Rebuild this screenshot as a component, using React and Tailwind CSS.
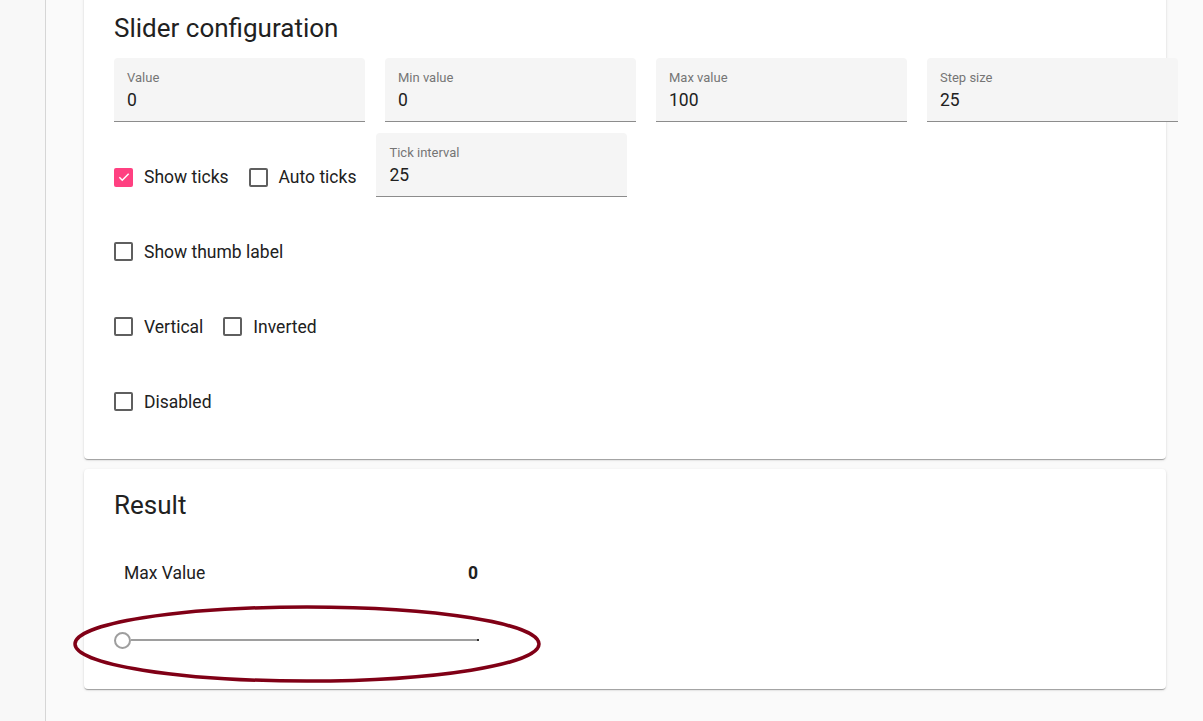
import React from 'react';

const font = { fontFamily: 'Roboto, "Noto Sans", sans-serif' };

function Field({ label, value, className = '' }) {
  return (
    <div className={`w-[251px] shrink-0 h-[64px] bg-[#f5f5f5] rounded-t-[4px] border-b border-[#8c8c8c] px-[13px] pt-[12px] ${className}`}>
      <div className="text-[13px] leading-[16px] text-[#757575]">{label}</div>
      <div className="mt-[2px] text-[17.5px] leading-[24px] text-[#212121]">{value}</div>
    </div>
  );
}

function Check({ label, checked }) {
  return (
    <label className="flex items-center gap-[11px] text-[17.5px] leading-[24px] text-[#212121] whitespace-nowrap">
      {checked ? (
        <span className="w-[19px] h-[19px] rounded-[2px] bg-[#ff4081] flex items-center justify-center">
          <svg width="14" height="14" viewBox="0 0 24 24" fill="none" stroke="white" strokeWidth="2.6">
            <path d="M4 12.5l5 5L20 6.5" />
          </svg>
        </span>
      ) : (
        <span className="w-[19px] h-[19px] rounded-[2px] border-2 border-[#5f5f5f] box-border" />
      )}
      <span>{label}</span>
    </label>
  );
}

const cardCls =
  'bg-white rounded-[4px] shadow-[0_2px_1px_-1px_rgba(0,0,0,0.2),0_1px_1px_0_rgba(0,0,0,0.14),0_1px_3px_0_rgba(0,0,0,0.12)] w-[1082px] px-[30px]';

export default function App() {
  return (
    <div className="relative flex min-h-[721px] h-[721px] overflow-hidden bg-[#fafafa]" style={font}>
      <div className="w-[46px] shrink-0 border-r border-[#d6d6d6] bg-[#f8f8f8]" />
      <div className="pl-[38px] flex flex-col gap-[10px] -mt-[8px]">
        <div className={`${cardCls} pt-[20px] pb-[20px]`}>
          <h2 className="text-[26px] leading-[32px] text-[#212121]">Slider configuration</h2>
          <div className="mt-[14px] flex gap-[20px]">
            <Field label="Value" value="0" />
            <Field label="Min value" value="0" />
            <Field label="Max value" value="100" />
            <Field label="Step size" value="25" />
          </div>
          <div className="mt-[11px] flex items-end">
            <div className="flex gap-[20px] mb-[8px] mr-[20px]">
              <Check label="Show ticks" checked />
              <Check label="Auto ticks" />
            </div>
            <Field label="Tick interval" value="25" />
          </div>
          <div className="flex flex-col">
            <div className="h-[75px] flex items-center mt-[17px]">
              <Check label="Show thumb label" />
            </div>
            <div className="h-[75px] flex items-center gap-[20px]">
              <Check label="Vertical" />
              <Check label="Inverted" />
            </div>
            <div className="h-[75px] flex items-center">
              <Check label="Disabled" />
            </div>
          </div>
        </div>

        <div className={`${cardCls} pt-[20px] pb-[25px]`}>
          <h2 className="text-[26px] leading-[32px] text-[#212121]">Result</h2>
          <div className="mt-[40px] w-[364px] flex justify-between pl-[10px] text-[17.5px] leading-[24px] text-[#212121]">
            <span>Max Value</span>
            <span className="font-bold">0</span>
          </div>
          <div className="mt-[31px] w-[365px] h-[48px] flex items-center relative">
            <div className="w-[17px] h-[17px] rounded-full border-2 border-[#9e9e9e] bg-white shrink-0 box-border" />
            <div className="flex-1 h-[2px] bg-[#9e9e9e] flex justify-end">
              <div className="w-[2px] h-[2px] bg-[#333]" />
            </div>
          </div>
        </div>
      </div>

      <svg className="absolute left-0 top-0 pointer-events-none" width="1203" height="721">
        <ellipse cx="307" cy="644" rx="232" ry="37" fill="none" stroke="#800016" strokeWidth="3.5" />
      </svg>
    </div>
  );
}
